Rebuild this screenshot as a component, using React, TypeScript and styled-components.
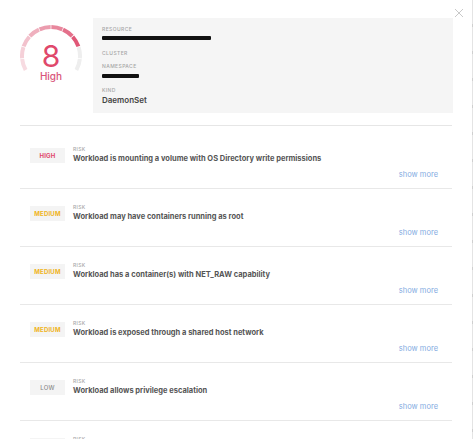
import React from "react";
import styled, { createGlobalStyle } from "styled-components";

const GlobalStyle = createGlobalStyle`
  html, body { margin: 0; padding: 0; background: #fff; overflow: hidden; }
  body { font-family: Inter, "Noto Sans", "DejaVu Sans", sans-serif; }
`;

const Page = styled.div`
  display: flex;
  width: 474px;
  height: 439px;
  overflow: hidden;
  position: relative;
`;

const Main = styled.div`
  width: 472px;
  box-sizing: border-box;
  padding: 18px 19px 0 20px;
`;

const Edge = styled.div`
  width: 1px;
  background: repeating-linear-gradient(
    to bottom,
    #e4e4e4 0px,
    #e4e4e4 24px,
    #cfcfcf 24px,
    #cfcfcf 27px
  );
`;

const Close = styled.button`
  position: absolute;
  top: 8px;
  left: 454px;
  width: 10px;
  height: 10px;
  padding: 0;
  border: 0;
  background: transparent;
  display: flex;
`;

const Header = styled.div`
  display: flex;
`;

const GaugeCol = styled.div`
  width: 73px;
  padding-top: 7px;
  display: grid;
  align-content: start;
  & > * {
    grid-area: 1 / 1;
  }
`;

const Score = styled.div`
  width: 62px;
  padding-top: 16px;
  display: flex;
  flex-direction: column;
  align-items: center;
`;

const ScoreNum = styled.div`
  font-size: 30px;
  line-height: 30px;
  font-weight: 400;
  color: #e0486b;
`;

const ScoreLabel = styled.div`
  font-size: 10px;
  line-height: 10px;
  font-weight: 500;
  color: #d9557a;
`;

const Panel = styled.div`
  flex: 1;
  background: #f5f5f5;
  padding: 7px 9px 8px;
  display: flex;
  flex-direction: column;
`;

const Label = styled.div<{ $gap?: number }>`
  margin-top: ${(p) => p.$gap ?? 0}px;
  font-size: 5px;
  line-height: 8px;
  letter-spacing: 0.4px;
  color: #a6a6a6;
  font-weight: 500;
`;

const Redact = styled.div<{ $w: number; $gap: number }>`
  margin-top: ${(p) => p.$gap}px;
  width: ${(p) => p.$w}px;
  height: 4px;
  background: #111;
  border-radius: 1px;
`;

const Value = styled.div`
  margin-top: 1px;
  font-size: 8px;
  line-height: 10px;
  font-weight: 600;
  color: #444;
`;

const Divider = styled.div`
  height: 1px;
  background: #e6e6e6;
  margin-top: 12px;
  width: 432px;
`;

const List = styled.div`
  margin-top: 5px;
  width: 432px;
`;

const Row = styled.div`
  display: flex;
  gap: 8px;
  padding: 15px 14px 8px 10px;
  border-bottom: 1px solid #e8e8e8;
`;

const levelColor: Record<string, string> = {
  HIGH: "#e0466a",
  MEDIUM: "#efb321",
  LOW: "#8a8a8a",
};

const Badge = styled.div<{ $level: string }>`
  width: 35px;
  height: 15px;
  margin-top: 2px;
  flex-shrink: 0;
  background: #f4f4f4;
  display: flex;
  align-items: center;
  justify-content: center;
  font-size: 6px;
  letter-spacing: 0.2px;
  font-weight: ${(p) => (p.$level === "LOW" ? 500 : 700)};
  color: ${(p) => levelColor[p.$level]};
`;

const Content = styled.div`
  flex: 1;
  display: flex;
  flex-direction: column;
`;

const RiskLabel = styled.div`
  font-size: 5px;
  line-height: 6px;
  letter-spacing: 0.3px;
  color: #a8a8a8;
  font-weight: 500;
`;

const Title = styled.div`
  font-size: 7.5px;
  line-height: 13px;
  font-weight: 700;
  color: #555;
`;

const ShowMore = styled.a`
  align-self: flex-end;
  margin-top: 5px;
  font-size: 7.5px;
  line-height: 10px;
  color: #84abdf;
  cursor: pointer;
`;

function Gauge() {
  const cx = 31;
  const cy = 31;
  const r = 29;
  const startDeg = 209;
  const sweep = 238;
  const n = 10;
  const seg = sweep / n;
  const gap = 1.4;
  const colors = [
    "#f7dbe1",
    "#f5d0d8",
    "#f2c1cc",
    "#efb0be",
    "#eb9cae",
    "#e8879d",
    "#e4708b",
    "#e05777",
    "#eeeeee",
    "#eeeeee",
  ];
  const pt = (deg: number) => {
    const a = (deg * Math.PI) / 180;
    return [cx + r * Math.cos(a), cy - r * Math.sin(a)];
  };
  return (
    <svg width="62" height="50" viewBox="0 0 62 50">
      {colors.map((c, i) => {
        const a0 = startDeg - i * seg - (i === 0 ? 0 : gap / 2);
        const a1 = startDeg - (i + 1) * seg + (i === n - 1 ? 0 : gap / 2);
        const [x0, y0] = pt(a0);
        const [x1, y1] = pt(a1);
        return (
          <path
            key={i}
            d={`M ${x0} ${y0} A ${r} ${r} 0 0 1 ${x1} ${y1}`}
            stroke={c}
            strokeWidth={4}
            fill="none"
          />
        );
      })}
    </svg>
  );
}

const risks = [
  { level: "HIGH", title: "Workload is mounting a volume with OS Directory write permissions" },
  { level: "MEDIUM", title: "Workload may have containers running as root" },
  { level: "MEDIUM", title: "Workload has a container(s) with NET_RAW capability" },
  { level: "MEDIUM", title: "Workload is exposed through a shared host network" },
  { level: "LOW", title: "Workload allows privilege escalation" },
  { level: "LOW", title: "Workload is missing resource limits" },
];

export default function App() {
  return (
    <>
      <GlobalStyle />
      <Page>
        <Main>
          <Header>
            <GaugeCol>
              <Gauge />
              <Score>
                <ScoreNum>8</ScoreNum>
                <ScoreLabel>High</ScoreLabel>
              </Score>
            </GaugeCol>
            <Panel>
              <Label>RESOURCE</Label>
              <Redact $w={109} $gap={3} />
              <Label $gap={9}>CLUSTER</Label>
              <Label $gap={5}>NAMESPACE</Label>
              <Redact $w={37} $gap={4} />
              <Label $gap={8}>KIND</Label>
              <Value>DaemonSet</Value>
            </Panel>
          </Header>
          <Divider />
          <List>
            {risks.map((r, i) => (
              <Row key={i}>
                <Badge $level={r.level}>{r.level}</Badge>
                <Content>
                  <RiskLabel>RISK</RiskLabel>
                  <Title>{r.title}</Title>
                  <ShowMore>show more</ShowMore>
                </Content>
              </Row>
            ))}
          </List>
        </Main>
        <Edge />
        <Close aria-label="close">
          <svg width="10" height="10" viewBox="0 0 10 10">
            <path d="M1 1 L9 9 M9 1 L1 9" stroke="#c9c9c9" strokeWidth="1" fill="none" />
          </svg>
        </Close>
      </Page>
    </>
  );
}
